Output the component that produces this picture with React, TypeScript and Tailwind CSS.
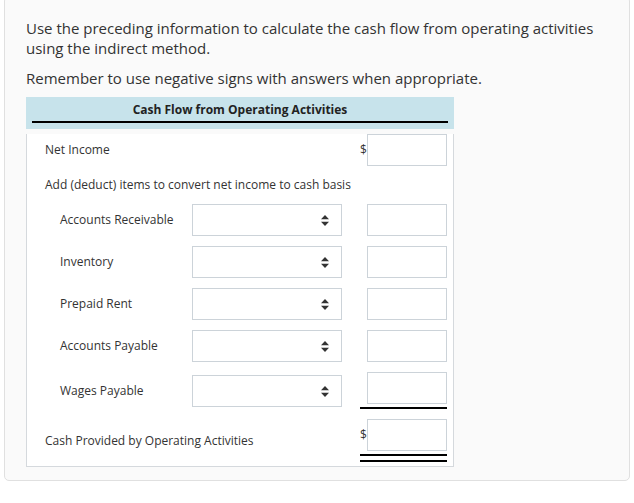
import React from "react";

const font = { fontFamily: '"Open Sans", Arial, sans-serif' };

function Sel({ className = "" }: { className?: string }) {
  return (
    <div className={`w-[150px] h-[32px] border border-[#ccd3d9] bg-white flex items-center justify-end pr-[12px] ${className}`}>
      <svg width="8" height="11" viewBox="0 0 8 11">
        <path d="M4 0 L8 4.3 H0 Z" fill="#333" />
        <path d="M0 6.7 H8 L4 11 Z" fill="#333" />
      </svg>
    </div>
  );
}

function Box() {
  return <div className="w-[80px] h-[32px] border border-[#ccd3d9] bg-white" />;
}

const items = ["Accounts Receivable", "Inventory", "Prepaid Rent", "Accounts Payable"];

export default function App() {
  return (
    <div className="w-[634px] h-[503px] bg-white" style={font}>
      <div className="mx-[4px] w-[626px] -mt-[4px] pt-[21px] pb-[13px] px-[21px] bg-[#fafafa] border border-[#e0e0e0] rounded-[5px]">
        <p className="text-[15px] leading-[20px] text-[#333]">
          Use the preceding information to calculate the cash flow from operating activities using the indirect method.
        </p>
        <p className="text-[15px] leading-[20px] text-[#333] mt-[10px]">
          Remember to use negative signs with answers when appropriate.
        </p>

        <div className="mt-[9px] w-[428px] text-[12px] text-[#333]">
          <div className="bg-[#c7e3eb] h-[32px] px-[6px] pt-[5px]">
            <div className="text-center font-bold leading-[16px] text-[12px] text-[#222] border-b-[2px] border-black pb-[3px]">
              Cash Flow from Operating Activities
            </div>
          </div>
          <div className="bg-white border border-t-0 border-[#d5d9dd] pb-[4px]">
            <div className="flex items-center h-[32px] mt-[5px]">
              <span className="pl-[18px] flex-1">Net Income</span>
              <span className="w-[7px] mr-0 leading-[14px]">$</span>
              <Box />
              <div className="w-[6px]" />
            </div>
            <div className="pl-[18px] leading-[18px] mt-[10px]">Add (deduct) items to convert net income to cash basis</div>
            {items.map((t, i) => (
              <div key={i} className="flex items-center h-[32px] mt-[10px]">
                <span className="pl-[33px] w-[165px]">{t}</span>
                <Sel />
                <div className="flex-1" />
                <Box />
                <div className="w-[6px]" />
              </div>
            ))}
            <div className="flex items-center h-[38px] mt-[10px]">
              <span className="pl-[33px] w-[165px]">Wages Payable</span>
              <Sel />
              <div className="flex-1" />
              <div className="w-[87px] flex flex-col items-end self-start">
                <Box />
                <div className="w-[87px] h-[2px] bg-black mt-[3px]" />
              </div>
              <div className="w-[6px]" />
            </div>
            <div className="flex items-center h-[43px] mt-[9px]">
              <span className="pl-[18px] flex-1">Cash Provided by Operating Activities</span>
              <div className="w-[87px] flex flex-col self-start">
                <div className="flex items-center">
                  <span className="w-[7px] leading-[14px]">$</span>
                  <Box />
                </div>
                <div className="w-[87px] h-[2px] bg-black mt-[3px]" />
                <div className="w-[87px] h-[2px] bg-black mt-[4px]" />
              </div>
              <div className="w-[6px]" />
            </div>
          </div>
        </div>
      </div>
    </div>
  );
}
